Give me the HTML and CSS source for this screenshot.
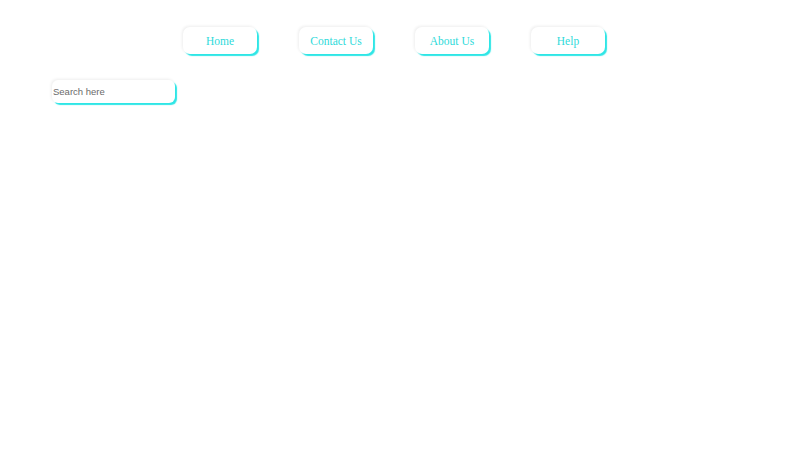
FILE: index.html
```html
<!DOCTYPE html>
<html>
<head>
<meta charset="utf-8">
<link rel="stylesheet" href="styles.css">
</head>
<body>
<nav class="nav">
  <a class="nav-btn" href="#">Home</a>
  <a class="nav-btn" href="#">Contact Us</a>
  <a class="nav-btn" href="#">About Us</a>
  <a class="nav-btn" href="#">Help</a>
</nav>
<div class="search-row">
  <input class="search" type="text" placeholder="Search here">
</div>
</body>
</html>
```
FILE: styles.css
```css
html, body {
  margin: 0;
  padding: 0;
  background: #fff;
}
body {
  font-family: "Liberation Serif", serif;
  min-height: 100vh;
}
.nav {
  display: flex;
  gap: 42px;
  padding: 27px 0 0 183px;
}
.nav-btn {
  display: flex;
  align-items: center;
  justify-content: center;
  width: 74px;
  height: 27px;
  box-sizing: border-box;
  border-radius: 7px;
  background: #fff;
  box-shadow: 2px 2px 1px #2ee6e6, -1px -1px 3px #eeeeee;
  color: #2edada;
  font-size: 11.5px;
  text-decoration: none;
}
.search-row {
  padding: 26px 0 20px 52px;
}
.search {
  display: block;
  width: 123px;
  height: 23px;
  box-sizing: border-box;
  border: none;
  outline: none;
  border-radius: 6px;
  background: #fff;
  box-shadow: 2px 2px 1px #2ee6e6, -1px -1px 3px #eeeeee;
  padding: 0 1px;
  font-family: "Liberation Sans", Arial, sans-serif;
  font-size: 9.5px;
  color: #555;
}
.search::placeholder {
  color: #6a6a6a;
}
```
